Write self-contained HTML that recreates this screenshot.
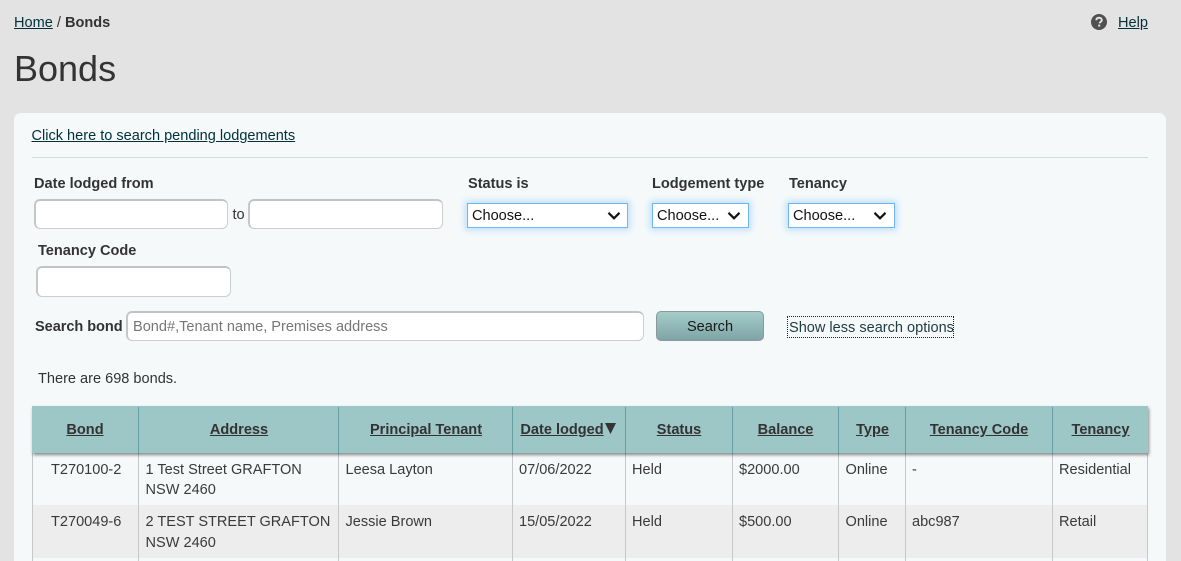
<!DOCTYPE html>
<html><head><meta charset="utf-8"><style>
html,body{margin:0;padding:0;width:1181px;height:561px;overflow:hidden;background:#e3e3e3;}
body{position:relative;font-family:"Liberation Sans",Arial,sans-serif;font-size:14.56px;color:#333;}
.t{position:absolute;white-space:nowrap;line-height:20px;}
.b{font-weight:bold;}
a,.u{color:#00303a;text-decoration:underline;}
.panel{position:absolute;left:14px;top:113px;width:1152px;height:460px;background:#f5f9fa;border-radius:7px;}
.inp{position:absolute;box-sizing:border-box;background:#fff;border:1px solid #c9cfcf;border-top:2px solid #bfc4c4;border-left:2px solid #c4c8c8;border-radius:6px;}
.sel{position:absolute;box-sizing:border-box;height:25px;top:203px;background:#fff;border:1px solid #6db5f5;box-shadow:0 0 6px 2px rgba(120,190,250,.45);color:#111;line-height:24px;padding-left:4px;}
.sel svg{position:absolute;top:7px;}
.hd{position:absolute;left:32px;top:406px;width:1116px;height:47px;background:#9dc6c6;box-shadow:1px 2px 3px rgba(0,0,0,.45);}
.hl{position:absolute;top:407px;height:46px;width:1px;background:#659ea3;}
.vl{position:absolute;top:453px;height:108px;width:1px;background:#c4c8c8;}
.th{position:absolute;top:420px;line-height:20px;font-weight:bold;text-decoration:underline;color:#333;white-space:nowrap;transform:translateX(-50%);}
.td{position:absolute;white-space:nowrap;color:#3a3a3a;}
.r1{top:460px;line-height:20px;}
.r2{top:512px;line-height:20.5px;}
</style></head><body>
<span class="t" style="left:14px;top:13px"><a>Home</a> / <span class="b">Bonds</span></span>
<svg style="position:absolute;left:1091px;top:14px" width="16" height="16" viewBox="0 0 16 16"><circle cx="8" cy="8" r="8" fill="#505050"/><path d="M5.3 6.2C5.4 4.6 6.6 3.8 8.1 3.8c1.5 0 2.7.9 2.7 2.2 0 1.9-2.2 1.8-2.2 3.4" fill="none" stroke="#e3e3e3" stroke-width="2"/><rect x="7.2" y="10.6" width="2" height="2" fill="#e3e3e3"/></svg>
<a class="t" style="left:1118px;top:13px">Help</a>
<div class="t" style="left:14px;top:49px;font-size:36px;line-height:40px;color:#333">Bonds</div>
<div class="panel"></div>
<a class="t" style="left:31.500px;top:126px">Click here to search pending lodgements</a>
<div style="position:absolute;left:32px;top:157px;width:1116px;height:1px;background:#d2dbdb"></div>

<span class="t b" style="left:34px;top:174px">Date lodged from</span>
<div class="inp" style="left:34px;top:199px;width:194px;height:30px"></div>
<span class="t" style="left:232.500px;top:205px">to</span>
<div class="inp" style="left:248px;top:199px;width:195px;height:30px"></div>
<span class="t b" style="left:468px;top:174px">Status is</span>
<span class="t b" style="left:652px;top:174px">Lodgement type</span>
<span class="t b" style="left:789px;top:174px">Tenancy</span>
<div class="sel" style="left:467px;width:161px">Choose...<svg style="left:139px" width="14" height="10" viewBox="0 0 14 10"><path d="M1.500 1.800L7 7.300L12.500 1.800" fill="none" stroke="#111" stroke-width="2.200"/></svg></div>
<div class="sel" style="left:652px;width:97px">Choose...<svg style="left:74px" width="14" height="10" viewBox="0 0 14 10"><path d="M1.500 1.800L7 7.300L12.500 1.800" fill="none" stroke="#111" stroke-width="2.200"/></svg></div>
<div class="sel" style="left:788px;width:107px">Choose...<svg style="left:84px" width="14" height="10" viewBox="0 0 14 10"><path d="M1.500 1.800L7 7.300L12.500 1.800" fill="none" stroke="#111" stroke-width="2.200"/></svg></div>

<span class="t b" style="left:38px;top:241px">Tenancy Code</span>
<div class="inp" style="left:36px;top:266px;width:195px;height:31px"></div>
<span class="t b" style="left:35px;top:317px;letter-spacing:-.05px">Search bond</span>
<div class="inp" style="left:126px;top:311px;width:518px;height:30px"></div>
<span class="t" style="left:133px;top:317px;color:#777">Bond#,Tenant name, Premises address</span>
<div style="position:absolute;box-sizing:border-box;left:656px;top:311px;width:108px;height:30px;border:1px solid #8a9a9c;border-radius:5px;background:linear-gradient(#a3cdc9,#7fa4a6);text-align:center;line-height:30px;color:#1a1a1a">Search</div>
<div class="t" style="left:788px;top:317px;height:20px;width:165px;outline:1px dotted #222;color:#1d3a40"><span style="position:relative;top:1px;margin-left:1px">Show less search options</span></div>
<span class="t" style="left:38px;top:369px">There are 698 bonds.</span>

<div style="position:absolute;left:33px;top:453px;width:1115px;height:52px;background:#f5f9fa"></div>
<div style="position:absolute;left:33px;top:505px;width:1115px;height:53px;background:#ededed"></div>
<div class="vl" style="left:32px"></div><div class="vl" style="left:138px"></div><div class="vl" style="left:338px"></div><div class="vl" style="left:512px"></div><div class="vl" style="left:625px"></div><div class="vl" style="left:732px"></div><div class="vl" style="left:838px"></div><div class="vl" style="left:905px"></div><div class="vl" style="left:1052px"></div><div class="vl" style="left:1147px"></div>
<div class="hd"></div>
<div class="hl" style="left:138px"></div><div class="hl" style="left:338px"></div><div class="hl" style="left:512px"></div><div class="hl" style="left:625px"></div><div class="hl" style="left:732px"></div><div class="hl" style="left:838px"></div><div class="hl" style="left:905px"></div><div class="hl" style="left:1052px"></div>
<span class="th" style="left:85px">Bond</span>
<span class="th" style="left:239px">Address</span>
<span class="th" style="left:426px">Principal Tenant</span>
<span class="th" style="left:562px">Date lodged</span>
<svg style="position:absolute;left:605px;top:423px" width="11" height="11" viewBox="0 0 11 11"><path d="M0 0H11L5.500 11Z" fill="#333"/></svg>
<span class="th" style="left:679px">Status</span>
<span class="th" style="left:785.500px">Balance</span>
<span class="th" style="left:872.500px">Type</span>
<span class="th" style="left:979px">Tenancy Code</span>
<span class="th" style="left:1100.500px">Tenancy</span>

<span class="td r1" style="left:51px">T270100-2</span>
<span class="td r1" style="left:145.500px">1 Test Street GRAFTON<br>NSW 2460</span>
<span class="td r1" style="left:345.500px">Leesa Layton</span>
<span class="td r1" style="left:519px">07/06/2022</span>
<span class="td r1" style="left:632px">Held</span>
<span class="td r1" style="left:739px">$2000.00</span>
<span class="td r1" style="left:845.500px">Online</span>
<span class="td r1" style="left:912px">-</span>
<span class="td r1" style="left:1059px">Residential</span>

<span class="td r2" style="left:51px">T270049-6</span>
<span class="td r2" style="left:145.500px">2 TEST STREET GRAFTON<br>NSW 2460</span>
<span class="td r2" style="left:345.500px">Jessie Brown</span>
<span class="td r2" style="left:519px">15/05/2022</span>
<span class="td r2" style="left:632px">Held</span>
<span class="td r2" style="left:739px">$500.00</span>
<span class="td r2" style="left:845.500px">Online</span>
<span class="td r2" style="left:912px">abc987</span>
<span class="td r2" style="left:1059px">Retail</span>
</body></html>
